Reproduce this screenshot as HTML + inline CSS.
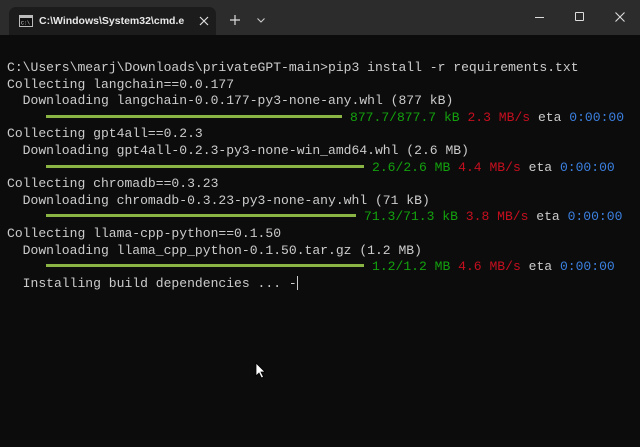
<!DOCTYPE html>
<html><head><style>
*{margin:0;padding:0;box-sizing:border-box}
body{width:640px;height:447px;background:#0c0c0c;overflow:hidden;position:relative;font-family:"Liberation Sans",sans-serif}
#bar{position:absolute;left:0;top:0;width:640px;height:35px;background:#2c2c2c}
#tab{position:absolute;left:9px;top:7px;width:207px;height:28px;background:#1c1c1c;border-radius:7px 7px 0 0}
#tab .t{position:absolute;left:30px;top:8px;color:#e8e8e8;font-size:10.5px;font-weight:bold;white-space:nowrap}
#term{position:absolute;left:7px;top:60px;font-family:"Liberation Mono",monospace;font-size:13.05px;line-height:16.6px;color:#cccccc;white-space:pre}
.g{color:#13a10e}.r{color:#c50f1f}.b{color:#3b80e0}
.pb{display:inline-block;height:3px;background:#8ab443;vertical-align:middle;position:relative;top:-1px}
</style></head><body>
<div id="bar">
<div id="tab">
<svg style="position:absolute;left:10px;top:8px" width="14" height="12" viewBox="0 0 14 12"><rect x="0.5" y="0.5" width="13" height="11" fill="#111" stroke="#bbb"/><rect x="1" y="1" width="12" height="2" fill="#bbb"/><text x="2" y="9.5" font-size="5" fill="#ddd" font-family="Liberation Mono">C:\</text></svg>
<div class="t">C:\Windows\System32\cmd.e</div>
<svg style="position:absolute;left:190px;top:9px" width="10" height="10" viewBox="0 0 10 10"><path d="M1 1L9 9M9 1L1 9" stroke="#ddd" stroke-width="1.2"/></svg>
</div>
<svg style="position:absolute;left:230px;top:15px" width="10" height="10"><path d="M5 0V10M0 5H10" stroke="#ddd" stroke-width="1.2"/></svg>
<svg style="position:absolute;left:257px;top:18px" width="8" height="5"><path d="M0.5 0.5L4 4L7.5 0.5" stroke="#ccc" fill="none" stroke-width="1.1"/></svg>
<div style="position:absolute;left:535px;top:17px;width:9px;height:1px;background:#ddd"></div>
<div style="position:absolute;left:575px;top:12px;width:9px;height:9px;border:1px solid #ddd;border-radius:1px"></div>
<svg style="position:absolute;left:615px;top:12px" width="10" height="10"><path d="M0.5 0.5L9.5 9.5M9.5 0.5L0.5 9.5" stroke="#ddd" stroke-width="1.1"/></svg>
</div>
<div id="term">C:\Users\mearj\Downloads\privateGPT-main&gt;pip3 install -r requirements.txt
Collecting langchain==0.0.177
  Downloading langchain-0.0.177-py3-none-any.whl (877 kB)
     <span class="pb" style="width:296px"></span> <span class="g">877.7/877.7 kB</span> <span class="r">2.3 MB/s</span> eta <span class="b">0:00:00</span>
Collecting gpt4all==0.2.3
  Downloading gpt4all-0.2.3-py3-none-win_amd64.whl (2.6 MB)
     <span class="pb" style="width:318px"></span> <span class="g">2.6/2.6 MB</span> <span class="r">4.4 MB/s</span> eta <span class="b">0:00:00</span>
Collecting chromadb==0.3.23
  Downloading chromadb-0.3.23-py3-none-any.whl (71 kB)
     <span class="pb" style="width:310px"></span> <span class="g">71.3/71.3 kB</span> <span class="r">3.8 MB/s</span> eta <span class="b">0:00:00</span>
Collecting llama-cpp-python==0.1.50
  Downloading llama_cpp_python-0.1.50.tar.gz (1.2 MB)
     <span class="pb" style="width:318px"></span> <span class="g">1.2/1.2 MB</span> <span class="r">4.6 MB/s</span> eta <span class="b">0:00:00</span>
  Installing build dependencies ... -<span style="display:inline-block;width:1px;height:14px;background:#ccc;vertical-align:middle"></span></div>
<svg style="position:absolute;left:255px;top:362px" width="11" height="17" viewBox="0 0 11 17"><path d="M1 1V14L4 11L6.5 16L8.5 15L6 10H10Z" fill="#fff" stroke="#000" stroke-width="0.8"/></svg>
</body></html>
